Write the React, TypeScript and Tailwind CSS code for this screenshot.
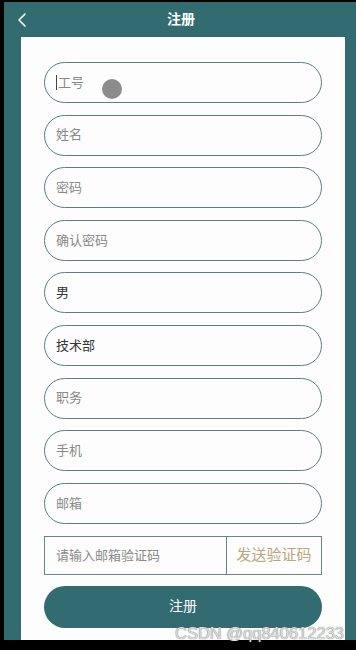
import React from 'react'
import { ChevronLeft } from 'lucide-react'

const font = { fontFamily: '"Liberation Sans", "Noto Sans CJK SC", sans-serif' }

const fields: { label: string; filled?: boolean }[] = [
    { label: '姓名' },
    { label: '密码' },
    { label: '确认密码' },
    { label: '男', filled: true },
    { label: '技术部', filled: true },
    { label: '职务' },
    { label: '手机' },
    { label: '邮箱' },
]

const Field: React.FC<{ label: string; filled?: boolean }> = ({ label, filled }) => (
    <div className="flex h-[41px] items-center rounded-full border border-[#5f7c7f] px-[11px]">
        <span className={`text-[13px] ${filled ? 'text-[#333]' : 'text-[#8a8a8a]'}`}>{label}</span>
    </div>
)

export default function App() {
    return (
        <div className="h-[650px] w-[356px] bg-black pl-[4px] pt-[2px] pb-[10px]" style={font}>
            <div className="relative flex h-full flex-col bg-[#326c71]">
                {/* 头部 */}
                <div className="relative flex h-[35px] shrink-0 items-center justify-center">
                    <ChevronLeft className="absolute left-[6px] h-6 w-6 text-white" strokeWidth={1.6} />
                    <h1 className="ml-[2px] text-[14px] font-bold text-white">注册</h1>
                </div>

                {/* 表单 */}
                <div className="ml-[17px] mr-[11px] flex-1 bg-[#fcfdfc] px-[23px] pt-[25px]">
                    <div className="flex flex-col gap-[11.6px]">
                        <div className="relative flex h-[41px] items-center rounded-full border border-[#5f7c7f] px-[11px]">
                            <span className="mr-px h-[15px] w-px bg-[#444]"></span>
                            <span className="text-[13px] text-[#8a8a8a]">工号</span>
                            <span className="absolute left-[57px] top-[16px] h-[20px] w-[20px] rounded-full bg-[#8c8c8c]"></span>
                        </div>
                        {fields.map((f) => (
                            <Field key={f.label} label={f.label} filled={f.filled} />
                        ))}
                    </div>

                    <div className="mt-[12px] flex h-[39px] border border-[#6b8486]">
                        <div className="flex flex-1 items-center pl-[11px] text-[13px] text-[#8a8a8a]">
                            请输入邮箱验证码
                        </div>
                        <div className="flex w-[95px] items-center justify-center border-l border-[#6b8486] text-[15px] text-[#bba77c]">
                            发送验证码
                        </div>
                    </div>

                    <button className="mt-[11px] flex h-[42px] w-full items-center justify-center rounded-full bg-[#326c71] text-[14px] text-white">
                        注册
                    </button>
                </div>

                {/* 水印 */}
                <span className="absolute bottom-[-6px] right-[12px] text-[16.5px] text-[#dcdcdc] [text-shadow:0_0_1px_#555]">
                    CSDN @qq840612233
                </span>
            </div>
        </div>
    )
}
